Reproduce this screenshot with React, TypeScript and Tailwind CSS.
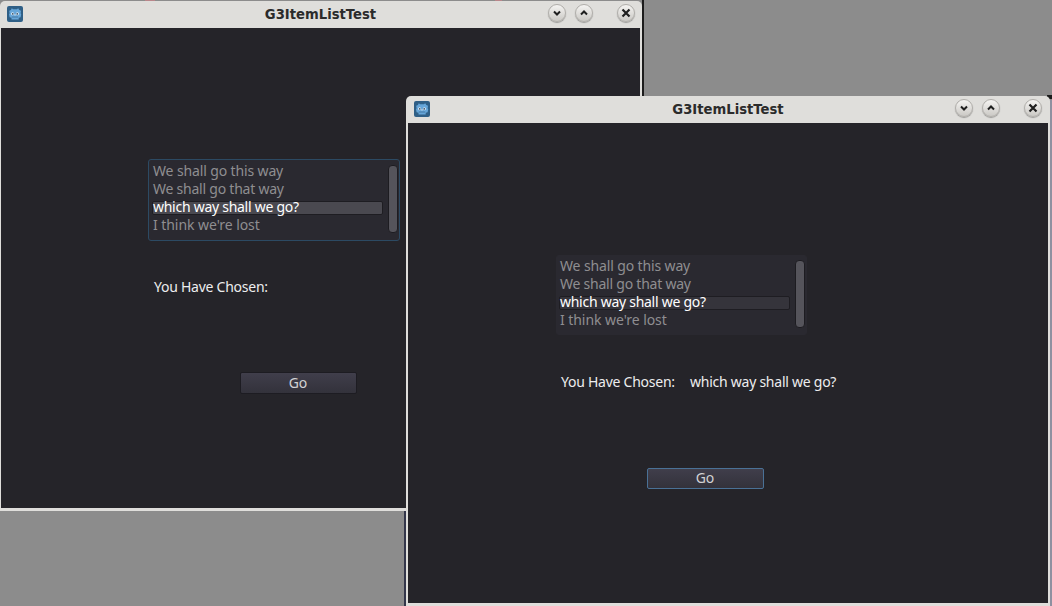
import React from "react";

function Logo() {
  return (
    <svg width="16" height="16" viewBox="0 0 16 16" className="block -translate-y-[1px]">
      <rect x="0" y="0" width="16" height="16" rx="2" fill="#2f5f86" />
      <path d="M4.800 2.200l1.300 1.100h3.800l1.300-1.100 1.100 1.800 1.700.8-.4 2.400.6 1-.6 3.100-1.900.4V13.400H4.500v-1.700l-1.900-.4-.6-3.100.6-1-.4-2.400 1.700-.8z" fill="#66a6d9" />
      <circle cx="5.600" cy="7.800" r="1.500" fill="#dfe9f2" />
      <circle cx="10.400" cy="7.800" r="1.500" fill="#dfe9f2" />
      <circle cx="5.800" cy="7.900" r=".8" fill="#24405a" />
      <circle cx="10.200" cy="7.900" r=".8" fill="#24405a" />
      <rect x="7.400" y="8.300" width="1.200" height="1.200" fill="#dfe9f2" />
      <path d="M4.800 11h6.400" stroke="#3a6d98" strokeWidth=".8" />
    </svg>
  );
}

function TitleButton({ d, w = 2 }: { d: string; w?: number }) {
  return (
    <div className="flex h-[18px] w-[18px] items-center justify-center rounded-full border border-[#b0aeaa] bg-gradient-to-b from-[#f5f4f2] to-[#cbc9c5] shadow-[0_1px_1px_rgba(0,0,0,0.3)]">
      <svg width="12" height="12" viewBox="0 0 12 12">
        <path d={d} fill="none" stroke="#1f1f1f" strokeWidth={w} />
      </svg>
    </div>
  );
}

function ListBox({ active }: { active: boolean }) {
  const rowText =
    "h-[18px] leading-[18px] text-[#8f8e91] " + (active ? "pl-[4px]" : "pl-[3px]");
  return (
    <div
      className={
        "flex rounded-[3px] border bg-[#2a2930] " +
        (active ? "h-[82px] w-[252px] border-[#2c4a63]" : "h-[80px] w-[251px] border-[#2a2930]")
      }
    >
      <div className={active ? "w-[234px] pt-[2px]" : "w-[233px] pt-[1px]"}>
        <div className={rowText + " tracking-[-0.13px]"}>We shall go this way</div>
        <div className={rowText + " tracking-[-0.23px]"}>We shall go that way</div>
        <div
          className={
            "mt-[3px] mb-[1px] h-[14px] rounded-[2px] border border-[#1e1d22] leading-[10px] tracking-[-0.27px] text-white " +
            (active ? "ml-[3px] bg-[#4a4950]" : "ml-[2px] bg-[#35343b]")
          }
        >
          which way shall we go?
        </div>
        <div className={rowText + " tracking-[-0.06px]"}>I think we're lost</div>
      </div>
      <div
        className={
          "ml-[5px] h-[68px] w-[10px] rounded-[4px] border border-[#1d1c21] bg-[#55545b] " +
          (active ? "mt-[5px]" : "mt-[4px]")
        }
      />
    </div>
  );
}

function GoButton({ focused }: { focused: boolean }) {
  return (
    <div
      className={
        "flex w-[117px] items-center justify-center rounded-[2px] border bg-gradient-to-b from-[#403e4b] to-[#33323b] pb-[2px] pr-[1px] text-[#d2d2d4] " +
        (focused ? "h-[21px] border-[#4a7196]" : "h-[22px] border-[#1d1c22]")
      }
    >
      Go
    </div>
  );
}

function GWindow({
  className,
  chosen,
  focused,
  bodyClass,
  labelClass,
  btnClass,
  controlsClass,
}: {
  className: string;
  chosen?: string;
  focused: boolean;
  bodyClass: string;
  labelClass: string;
  btnClass: string;
  controlsClass: string;
}) {
  return (
    <div className={"absolute flex flex-col rounded-t-[5px] bg-[#dfdedb] " + className}>
      <div className="relative flex h-[27px] shrink-0 items-center pl-[6px]">
        <Logo />
        <div className="absolute inset-x-0 top-0 flex h-[27px] items-center justify-center font-['DejaVu_Sans'] text-[13.2px] font-bold text-[#2b2b2b]">
          G3ItemListTest
        </div>
        <div className={"absolute top-[3px] flex items-center " + controlsClass}>
          <TitleButton d="M3 4.500l3 3 3-3" />
          <div className="w-[9px]" />
          <TitleButton d="M3 7.500l3-3 3 3" />
          <div className="w-[24px]" />
          <TitleButton d="M2.500 2.500l7 7M9.500 2.500l-7 7" w={2.2} />
        </div>
      </div>
      <div className={"min-h-0 flex-1 bg-[#252429] font-['Noto_Sans'] text-[14px] " + bodyClass}>
        <ListBox active={!focused} />
        <div className={"flex h-[18px] items-center tracking-[-0.25px] text-[#ededee] " + labelClass}>
          <span className="w-[129px]">You Have Chosen:</span>
          <span>{chosen}</span>
        </div>
        <div className={btnClass}>
          <GoButton focused={focused} />
        </div>
      </div>
    </div>
  );
}

export default function App() {
  return (
    <div className="relative h-[606px] w-[1052px] overflow-hidden bg-[#8c8c8c]">
      <div className="absolute left-[145px] top-0 h-[2px] w-[10px] bg-[#b9868a]" />
      <div className="absolute left-[495px] top-0 h-[2px] w-[7px] bg-[#b9868a]" />
      <div className="absolute left-[642px] top-0 h-[96px] w-[2px] bg-[#1c1c1c]" />
      <div className="absolute left-[404px] top-[511px] h-[95px] w-[2px] bg-[#33364a]" />
      <div className="absolute left-[1050px] top-[100px] h-[506px] w-[2px] bg-[#8f90a0]" />
      <div className="absolute left-[1047px] top-[95px] h-[4px] w-[5px] bg-[#1c1c1c]" />
      <GWindow
        className="left-0 top-[1px] h-[510px] w-[642px] pb-[3px] pl-[1px] pr-[2px]"
        focused={false}
        bodyClass="pl-[147px] pt-[131px]"
        labelClass="mt-[36px] ml-[6px]"
        btnClass="mt-[77px] ml-[92px]"
        controlsClass="right-[5px]"
      />
      <GWindow
        className="left-[406px] top-[96px] h-[510px] w-[644px] pl-[2px] pr-[2px] pb-[3px]"
        chosen="which way shall we go?"
        focused={true}
        bodyClass="pl-[148px] pt-[132px]"
        labelClass="mt-[37px] ml-[5px]"
        btnClass="mt-[78px] ml-[91px]"
        controlsClass="right-[6px]"
      />
    </div>
  );
}
